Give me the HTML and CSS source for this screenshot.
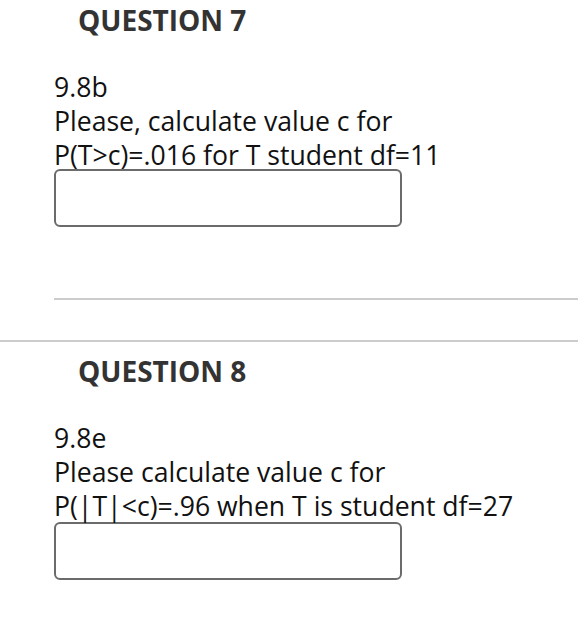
FILE: index.html
```html
<!DOCTYPE html>
<html>
<head>
<meta charset="utf-8">
<link rel="stylesheet" href="styles.css">
</head>
<body>
<div class="question q7">
  <h2 class="q-title">QUESTION 7</h2>
  <div class="q-text">9.8b<br>Please, calculate value c for<br>P(T&gt;c)=.016 for T student df=11</div>
  <input class="answer" type="text">
</div>
<hr class="rule-inner">
<hr class="rule-full">
<div class="question q8">
  <h2 class="q-title">QUESTION 8</h2>
  <div class="q-text">9.8e<br>Please calculate value c for<br>P(|T|&lt;c)=.96 when T is student df=27</div>
  <input class="answer" type="text">
</div>
</body>
</html>
```

FILE: styles.css
```css
html, body {
  margin: 0;
  padding: 0;
  background: #fff;
}
body {
  font-family: "Open Sans", "DejaVu Sans", sans-serif;
  width: 578px;
}
.question {
  padding-left: 54px;
}
.q7 {
  padding-top: 2px;
}
.q8 {
  padding-top: 11px;
}
.q-title {
  margin: 0 0 0 24px;
  font-size: 28px;
  line-height: 36px;
  font-weight: 700;
  color: #333;
}
.q-text {
  margin-top: 32px;
  font-size: 26.6px;
  line-height: 34px;
  color: #111;
}
.answer {
  display: block;
  box-sizing: border-box;
  width: 348px;
  height: 58px;
  margin: -3px 0 0 0;
  border: 2px solid #6b6b6b;
  border-radius: 6px;
  background: #fff;
  outline: none;
  padding: 0;
}
.q8 .answer {
  margin-top: -1px;
}
.rule-inner {
  margin: 71px 0 0 54px;
  border: 0;
  height: 2px;
  background: #cccccc;
}
.rule-full {
  margin: 40px 0 0 0;
  border: 0;
  height: 2px;
  background: #cccccc;
}
```
